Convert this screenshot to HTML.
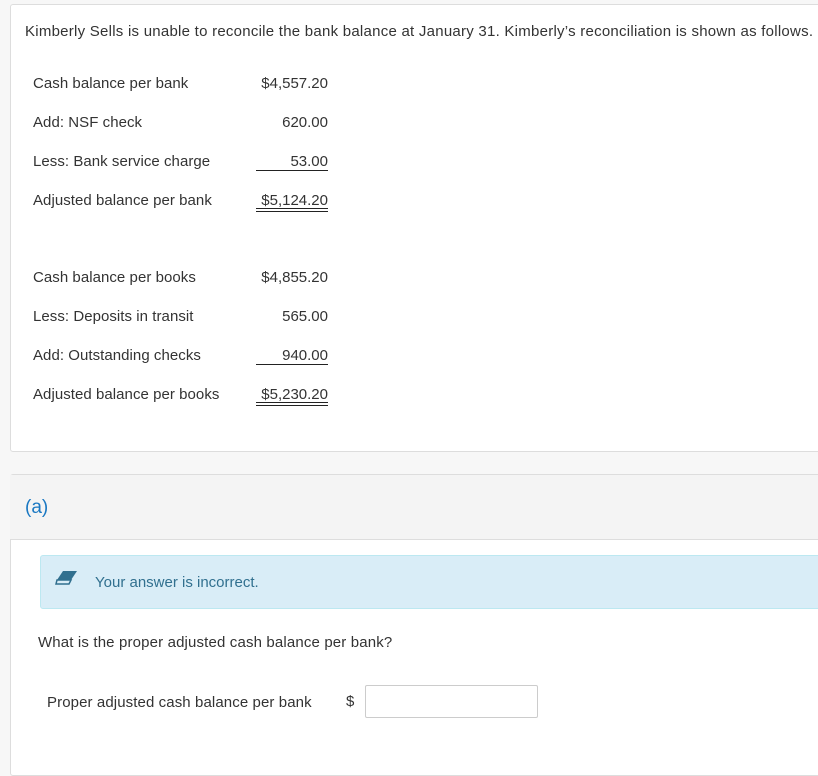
<!DOCTYPE html>
<html><head><style>
body{margin:0;width:818px;height:752px;background:#f7f7f7;font-family:"Liberation Sans",sans-serif;color:#333;position:relative;overflow:hidden}
.a{position:absolute;white-space:nowrap}
.card1{position:absolute;left:10px;top:4px;width:820px;height:446px;background:#fff;border:1px solid #ddd;border-radius:3px}
.card2{position:absolute;left:10px;top:474px;width:820px;height:300px;background:#fff;border:1px solid #ddd;border-radius:3px}
.hdr{position:absolute;left:10px;top:475px;width:820px;height:64px;background:#f4f4f4;border-bottom:1px solid #ddd}
.alert{position:absolute;left:40px;top:555px;width:790px;height:52px;background:#d9edf7;border:1px solid #bce8f1;border-radius:3px}
.l{left:33px;font-size:15px;letter-spacing:0.05px}
.n{right:490px;font-size:15px;text-align:right;letter-spacing:0px}
.u{position:absolute;left:256px;width:72px;border-top:1.5px solid #222}
.input{position:absolute;left:365px;top:685px;width:171px;height:31px;border:1px solid #ccc;background:#fff;border-radius:2px}
</style></head><body>
<div class="card1"></div>
<div class="a" style="left:25px;top:23px;font-size:15px;letter-spacing:0.25px">Kimberly Sells is unable to reconcile the bank balance at January 31. Kimberly’s reconciliation is shown as follows.</div>
<div class="a l" style="top:75px">Cash balance per bank</div><div class="a n" style="top:75px">$4,557.20</div>
<div class="a l" style="top:114px">Add: NSF check</div><div class="a n" style="top:114px">620.00</div>
<div class="a l" style="top:153px">Less: Bank service charge</div><div class="a n" style="top:153px">53.00</div>
<div class="u" style="top:170px"></div>
<div class="a l" style="top:192px">Adjusted balance per bank</div><div class="a n" style="top:192px">$5,124.20</div>
<div class="u" style="top:208px;height:2px;border-bottom:1.5px solid #222"></div>
<div class="a l" style="top:269px">Cash balance per books</div><div class="a n" style="top:269px">$4,855.20</div>
<div class="a l" style="top:308px">Less: Deposits in transit</div><div class="a n" style="top:308px">565.00</div>
<div class="a l" style="top:347px">Add: Outstanding checks</div><div class="a n" style="top:347px">940.00</div>
<div class="u" style="top:364px"></div>
<div class="a l" style="top:386px">Adjusted balance per books</div><div class="a n" style="top:386px">$5,230.20</div>
<div class="u" style="top:402px;height:2px;border-bottom:1.5px solid #222"></div>
<div class="card2"></div>
<div class="hdr"></div>
<div class="a" style="left:25px;top:497px;font-size:19px;color:#1a78c2">(a)</div>
<div class="alert"></div>
<svg class="a" style="left:55px;top:570px" width="24" height="16" viewBox="0 0 24 16"><path d="M8 1H22L16 10H2Z" fill="#31708f"/><path d="M2 10H16L14 14H1Z" fill="none" stroke="#31708f" stroke-width="1.5"/></svg>
<div class="a" style="left:95px;top:574px;font-size:15px;color:#31708f;letter-spacing:0px">Your answer is incorrect.</div>
<div class="a" style="left:38px;top:634px;font-size:15px;letter-spacing:0.15px">What is the proper adjusted cash balance per bank?</div>
<div class="a" style="left:47px;top:694px;font-size:15px;letter-spacing:0.1px">Proper adjusted cash balance per bank</div>
<div class="a" style="left:346px;top:693px;font-size:15px">$</div>
<div class="input"></div>
</body></html>
